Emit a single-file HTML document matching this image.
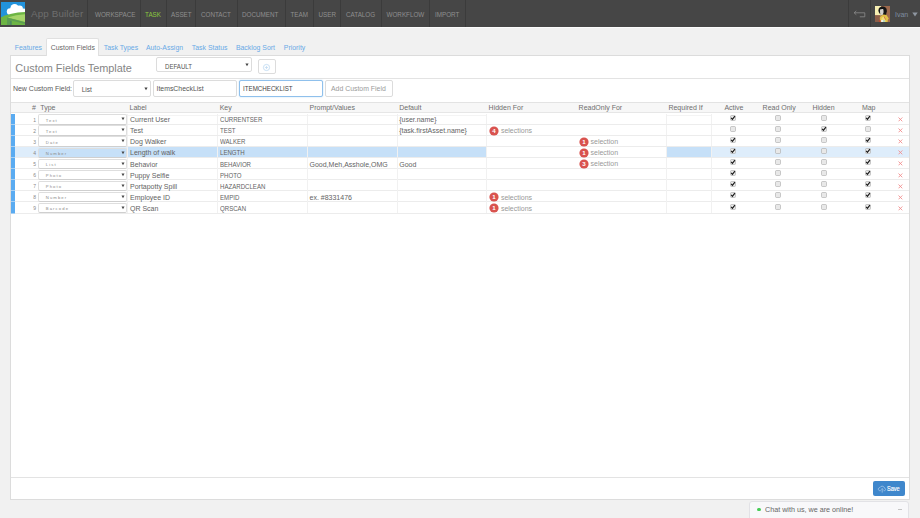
<!DOCTYPE html>
<html><head><meta charset="utf-8">
<style>
*{box-sizing:border-box;margin:0;padding:0}
html,body{width:920px;height:518px;overflow:hidden}
body{background:#f1f1f1;font-family:"Liberation Sans",sans-serif;position:relative;color:#555}
.a{position:absolute;white-space:nowrap}
#hdr{position:absolute;left:0;top:0;width:920px;height:27px;background:#464646}
.dv{position:absolute;top:0;width:1px;height:27px;background:#3b3b3b}
.nav{position:absolute;top:11px;font-size:6.3px;line-height:7px;color:#8f8f8f;white-space:nowrap}
.tab{position:absolute;top:42.5px;font-size:6.9px;line-height:9px;color:#68a9e6;white-space:nowrap}
#panel{position:absolute;left:10px;top:55px;width:900px;height:445px;background:#fff;border:1px solid #dcdcdc}
.hl{position:absolute;height:1px;background:#e3e3e3}
.box{position:absolute;border:1px solid #dcdcdc;border-radius:2px;background:#fff}
.t7{font-size:7px;line-height:9px}
.up{font-size:7px !important;transform:scaleX(.87);transform-origin:0 0}
.th{position:absolute;top:104px;font-size:7px;line-height:8px;color:#6e6e6e;white-space:nowrap}
</style></head><body>

<div id="hdr">
  <svg class="a" style="left:1px;top:2px" width="24" height="23" viewBox="0 0 24 23">
    <rect width="24" height="23" fill="#2293dc"/>
    <circle cx="9.2" cy="9.6" r="3.4" fill="#fff"/>
    <circle cx="13.6" cy="6.2" r="4.3" fill="#fff"/>
    <circle cx="18.6" cy="6.8" r="3.3" fill="#fff"/>
    <circle cx="22.5" cy="9.2" r="2.8" fill="#fff"/>
    <rect x="9" y="7" width="15" height="5" fill="#fff"/>
    <path d="M0 15.2 Q9 10.8 24 10 L24 23 L0 23 Z" fill="#6db544"/>
    <path d="M6.5 15.6 Q15 12.4 24 12.2 L24 20 Z" fill="#a6d46a"/>
    <path d="M6 15.6 L24 20.2 L24 22 L10.5 18.6 L10.5 23 L6 23 Z" fill="#5c9d52"/>
    <rect x="9" y="19" width="1.6" height="4" fill="#4f8c60"/>
  </svg>
  <div class="a" style="left:31px;top:7.5px;font-size:9.8px;line-height:11px;letter-spacing:.15px;color:#6e6e6e">App Builder</div>
  <div class="dv" style="left:87px"></div>
  <div class="dv" style="left:140px"></div>
  <div class="dv" style="left:166px"></div>
  <div class="dv" style="left:195px"></div>
  <div class="dv" style="left:237px"></div>
  <div class="dv" style="left:285px"></div>
  <div class="dv" style="left:313px"></div>
  <div class="dv" style="left:340px"></div>
  <div class="dv" style="left:381px"></div>
  <div class="dv" style="left:429px"></div>
  <div class="dv" style="left:465px"></div>
  <div class="dv" style="left:848px"></div>
  <div class="dv" style="left:870px"></div>
  <div class="nav" style="left:95px">WORKSPACE</div>
  <div class="nav" style="left:145px;color:#8cc63f">TASK</div>
  <div class="nav" style="left:171px">ASSET</div>
  <div class="nav" style="left:201px">CONTACT</div>
  <div class="nav" style="left:242px">DOCUMENT</div>
  <div class="nav" style="left:290.5px">TEAM</div>
  <div class="nav" style="left:318.5px">USER</div>
  <div class="nav" style="left:346px">CATALOG</div>
  <div class="nav" style="left:386.5px">WORKFLOW</div>
  <div class="nav" style="left:435px">IMPORT</div>
  <svg class="a" style="left:853px;top:10px" width="14" height="9" viewBox="0 0 14 9">
    <path d="M1.2 2.8 H11.8 V6.8 H6.8" fill="none" stroke="#8c8c8c" stroke-width="0.8"/>
    <path d="M3.3 0.9 L1.1 2.8 L3.3 4.7" fill="none" stroke="#8c8c8c" stroke-width="0.8"/>
  </svg>
  <svg class="a" style="left:875px;top:6px" width="15" height="16" viewBox="0 0 15 16">
    <rect width="15" height="16" fill="#9e6a4e"/>
    <rect width="6" height="9.3" fill="#f6eeb2"/>
    <rect y="9.3" width="5" height="6.7" fill="#8c5e48"/>
    <ellipse cx="7.6" cy="4.5" rx="4.2" ry="4.1" fill="#161616"/>
    <path d="M9 5 L11.6 5 L11.2 8.6 L9.6 9.6 L8.6 9.6 Z" fill="#161616"/>
    <path d="M5 3.6 C6 3.2 7.5 2.6 8.4 3.4 L8.6 6.2 L7.8 8.8 L6.4 9.2 L5.1 7.6 Z" fill="#d4d2cc"/>
    <path d="M5 16 L4.8 11.2 L6.6 9.6 L8.8 8.6 L11.4 9 L13.8 12.6 L12.8 14 L12.6 16 Z" fill="#e2c244"/>
    <path d="M6 16 L6.6 12 L8.6 10.6 L10.5 11.5 L10.5 16 Z" fill="#efdc7c"/>
    <rect x="4.2" y="14.2" width="1.5" height="1.8" fill="#c8402c"/>
    <rect x="6.2" y="14" width="2" height="2" fill="#eeeeea"/>
    <rect x="8.2" y="14.2" width="1.6" height="1.8" fill="#a8d8c8"/>
    <path d="M9.2 10.6 L10.6 13.6" stroke="#c8402c" stroke-width="0.7"/>
  </svg>
  <div class="nav" style="left:895px;top:11px;font-size:7px;color:#7f8ea0">Ivan</div>
  <svg class="a" style="left:912px;top:12px" width="6" height="5" viewBox="0 0 6 5"><path d="M0.3 0.5 H5.7 L3 4.5 Z" fill="#8e96a0"/></svg>
</div>
<div class="a" style="left:0;top:27px;width:920px;height:1px;background:#fbfbfb"></div>

<!-- tabs -->
<div class="a" style="left:46px;top:38px;width:53px;height:18px;background:#fff;border:1px solid #e0e0e0;border-bottom:none;border-radius:2px 2px 0 0;z-index:2"></div>
<div class="tab" style="left:14.8px">Features</div>
<div class="tab" style="left:50.8px;color:#666;z-index:3">Custom Fields</div>
<div class="tab" style="left:103.8px">Task Types</div>
<div class="tab" style="left:145.9px">Auto-Assign</div>
<div class="tab" style="left:191.8px">Task Status</div>
<div class="tab" style="left:235.9px">Backlog Sort</div>
<div class="tab" style="left:283.8px">Priority</div>

<div id="panel"></div>

<!-- title row -->
<div class="a" style="left:15.3px;top:62.3px;font-size:10.9px;line-height:13px;color:#858585">Custom Fields Template</div>
<div class="box" style="left:156px;top:57px;width:95.5px;height:14.6px"></div>
<div class="a up" style="left:164.7px;top:61.8px;line-height:9px;color:#555">DEFAULT</div>
<svg class="a" style="left:245px;top:62.5px" width="4" height="4" viewBox="0 0 4 4"><path d="M0.4 0.6 H3.6 L2 3.3 Z" fill="#444"/></svg>
<div class="box" style="left:257.5px;top:59.3px;width:18.5px;height:14.5px"></div>
<svg class="a" style="left:262px;top:62.6px" width="9" height="9" viewBox="0 0 9 9"><circle cx="4.5" cy="4.5" r="3.1" fill="none" stroke="#c3dcf3" stroke-width="0.9"/><path d="M4.5 2.9 V6.1 M2.9 4.5 H6.1" stroke="#c3dcf3" stroke-width="0.8"/></svg>
<div class="hl" style="left:11px;top:78px;width:898px"></div>

<!-- new custom field row -->
<div class="a t7" style="left:12.9px;top:84px;color:#5a5a5a">New Custom Field:</div>
<div class="box" style="left:73px;top:80px;width:77.5px;height:16.8px"></div>
<div class="a" style="left:81.7px;top:85px;font-size:6.6px;line-height:9px;color:#555">List</div>
<svg class="a" style="left:144.2px;top:86.8px" width="4" height="4" viewBox="0 0 4 4"><path d="M0.4 0.6 H3.6 L2 3.3 Z" fill="#444"/></svg>
<div class="box" style="left:152.5px;top:80px;width:84px;height:16.8px"></div>
<div class="a" style="left:156.5px;top:84.2px;font-size:6.9px;line-height:9px;color:#555">ItemsCheckList</div>
<div class="box" style="left:238.6px;top:80px;width:84.5px;height:16.5px;border-color:#8fc0ec;box-shadow:0 0 1.5px rgba(102,175,233,.5)"></div>
<div class="a up" style="left:242.6px;top:84px;line-height:9px;color:#444;transform:scaleX(.885)">ITEMCHECKLIST</div>
<div class="box" style="left:325px;top:80px;width:67.5px;height:16.5px"></div>
<div class="a" style="left:331px;top:84.3px;font-size:6.9px;line-height:9px;color:#9a9a9a">Add Custom Field</div>
<div class="hl" style="left:11px;top:101.5px;width:898px"></div>

<!-- table header -->
<div class="a" style="left:11px;top:102.5px;width:898px;height:10px;background:#f7f7f7"></div>
<div class="hl" style="left:11px;top:112px;width:898px;background:#e6e6e6"></div>
<div class="th" style="left:32px">#</div>
<div class="th" style="left:40.3px">Type</div>
<div class="th" style="left:129.5px">Label</div>
<div class="th" style="left:219.7px">Key</div>
<div class="th" style="left:309.5px">Prompt/Values</div>
<div class="th" style="left:399.2px">Default</div>
<div class="th" style="left:488.6px">Hidden For</div>
<div class="th" style="left:578.6px">ReadOnly For</div>
<div class="th" style="left:668.4px">Required If</div>
<div class="th" style="left:724.4px">Active</div>
<div class="th" style="left:762.6px">Read Only</div>
<div class="th" style="left:812.4px">Hidden</div>
<div class="th" style="left:861.9px">Map</div>


<!-- footer -->
<div class="hl" style="left:11px;top:477px;width:898px;background:#e3e3e3"></div>
<div class="a" style="left:873px;top:481.3px;width:32px;height:14.5px;background:#3f87cc;border-radius:2px"></div>
<svg class="a" style="left:875px;top:482px" width="14" height="14" viewBox="0 0 14 14"><path d="M5.8 8.7 H4.9 C3.9 8.7 3.3 8 3.3 7.1 C3.3 6.2 4 5.6 4.9 5.6 C5.2 4.8 6.1 4.2 7.1 4.2 C8.4 4.2 9.3 5 9.4 6.1 C10.1 6.2 10.6 6.7 10.6 7.4 C10.6 8.1 10.1 8.7 9.4 8.7 H8.6" fill="none" stroke="#aecbea" stroke-width="0.75"/><path d="M7.2 10.6 V6.6 M6.2 7.6 L7.2 6.6 L8.2 7.6" fill="none" stroke="#aecbea" stroke-width="0.75"/></svg>
<div class="a" style="left:887.3px;top:485px;font-size:6.8px;line-height:8px;color:#fff;transform:scaleX(.82);transform-origin:0 0;-webkit-text-stroke:0.15px #fff">Save</div>

<!-- chat -->
<div class="a" style="left:749px;top:501px;width:160px;height:20px;background:#f8f8fa;border:1px solid #e2e2e6;border-radius:3px 3px 0 0"></div>
<div class="a" style="left:757.2px;top:507.7px;width:3.8px;height:3.8px;border-radius:50%;background:#45cc55"></div>
<div class="a" style="left:765px;top:505.3px;font-size:7.2px;line-height:9px;color:#666">Chat with us, we are online!</div>
<div class="a" style="left:897.5px;top:509px;width:4.5px;height:0.8px;background:#c4c4c4"></div>

<!-- ROWS -->
<div class="a" style="left:11px;top:113.50px;width:4px;height:99.63px;background:#5aabf1"></div>
<div class="a" style="left:15px;top:123.97px;width:894px;height:1px;background:#ececec"></div>
<div class="a" style="left:11px;top:123.97px;width:4px;height:1px;background:#a6d0f5"></div>
<div class="a" style="left:26px;top:116.70px;width:10px;text-align:right;font-size:5px;line-height:6px;color:#888">1</div>
<div class="a" style="left:38px;top:114.30px;width:89.2px;height:10.3px;border:1px solid #dedede;border-bottom-color:#cfcfcf;border-radius:2px;background:#fff"></div>
<div class="a" style="left:45.8px;top:118.80px;font-size:4.2px;line-height:4px;color:#8a8a8a;letter-spacing:1.1px">Text</div>
<svg class="a" style="left:121.2px;top:117.30px" width="4" height="4" viewBox="0 0 4 4"><path d="M0.5 0.6 H3.5 L2 3.2 Z" fill="#444"/></svg>
<div class="a" style="left:127px;top:114.50px;width:359px;height:1px;background:#f4f4f4"></div>
<div class="a" style="left:666px;top:114.50px;width:45px;height:1px;background:#f4f4f4"></div>
<div class="a" style="left:127px;top:113.80px;width:1px;height:10.47px;background:#f1f1f1"></div>
<div class="a" style="left:217px;top:113.80px;width:1px;height:10.47px;background:#f1f1f1"></div>
<div class="a" style="left:307px;top:113.80px;width:1px;height:10.47px;background:#f1f1f1"></div>
<div class="a" style="left:397px;top:113.80px;width:1px;height:10.47px;background:#f1f1f1"></div>
<div class="a" style="left:486px;top:113.80px;width:1px;height:10.47px;background:#f1f1f1"></div>
<div class="a" style="left:666px;top:113.80px;width:1px;height:10.47px;background:#f1f1f1"></div>
<div class="a" style="left:711px;top:113.80px;width:1px;height:10.47px;background:#f1f1f1"></div>
<div class="a" style="left:130px;top:115.25px;font-size:7px;line-height:9px;color:#636363">Current User</div>
<div class="a up" style="left:219.7px;top:115.25px;line-height:9px;color:#636363">CURRENTSER</div>
<div class="a" style="left:399.2px;top:115.25px;font-size:7px;line-height:9px;color:#636363">{user.name}</div>
<svg class="a" style="left:730.30px;top:115.00px" width="6" height="6" viewBox="0 0 6 6"><rect x="0.5" y="0.5" width="5" height="5" rx="1" fill="#e8e8e8" stroke="#aaa" stroke-width="0.6"/><path d="M1.2 2.9 L2.4 4.3 L4.9 1.1" fill="none" stroke="#1a1a1a" stroke-width="1.2"/></svg>
<svg class="a" style="left:775.30px;top:115.00px" width="6" height="6" viewBox="0 0 6 6"><rect x="0.5" y="0.5" width="5" height="5" rx="1" fill="#e8e8e8" stroke="#aaa" stroke-width="0.6"/></svg>
<svg class="a" style="left:820.50px;top:115.00px" width="6" height="6" viewBox="0 0 6 6"><rect x="0.5" y="0.5" width="5" height="5" rx="1" fill="#e8e8e8" stroke="#aaa" stroke-width="0.6"/></svg>
<svg class="a" style="left:865.00px;top:115.00px" width="6" height="6" viewBox="0 0 6 6"><rect x="0.5" y="0.5" width="5" height="5" rx="1" fill="#e8e8e8" stroke="#aaa" stroke-width="0.6"/><path d="M1.2 2.9 L2.4 4.3 L4.9 1.1" fill="none" stroke="#1a1a1a" stroke-width="1.2"/></svg>
<svg class="a" style="left:897.6px;top:117.20px" width="5" height="5" viewBox="0 0 5 5"><path d="M0.5 0.5 L4.3 4.3 M4.3 0.5 L0.5 4.3" stroke="#f28e8e" stroke-width="0.9"/></svg>
<div class="a" style="left:15px;top:135.04px;width:894px;height:1px;background:#ececec"></div>
<div class="a" style="left:11px;top:135.04px;width:4px;height:1px;background:#a6d0f5"></div>
<div class="a" style="left:26px;top:127.77px;width:10px;text-align:right;font-size:5px;line-height:6px;color:#888">2</div>
<div class="a" style="left:38px;top:125.37px;width:89.2px;height:10.3px;border:1px solid #dedede;border-bottom-color:#cfcfcf;border-radius:2px;background:#fff"></div>
<div class="a" style="left:45.8px;top:129.87px;font-size:4.2px;line-height:4px;color:#8a8a8a;letter-spacing:1.1px">Text</div>
<svg class="a" style="left:121.2px;top:128.37px" width="4" height="4" viewBox="0 0 4 4"><path d="M0.5 0.6 H3.5 L2 3.2 Z" fill="#444"/></svg>
<div class="a" style="left:127px;top:124.87px;width:1px;height:10.47px;background:#f1f1f1"></div>
<div class="a" style="left:217px;top:124.87px;width:1px;height:10.47px;background:#f1f1f1"></div>
<div class="a" style="left:307px;top:124.87px;width:1px;height:10.47px;background:#f1f1f1"></div>
<div class="a" style="left:397px;top:124.87px;width:1px;height:10.47px;background:#f1f1f1"></div>
<div class="a" style="left:486px;top:124.87px;width:1px;height:10.47px;background:#f1f1f1"></div>
<div class="a" style="left:666px;top:124.87px;width:1px;height:10.47px;background:#f1f1f1"></div>
<div class="a" style="left:711px;top:124.87px;width:1px;height:10.47px;background:#f1f1f1"></div>
<div class="a" style="left:130px;top:126.32px;font-size:7px;line-height:9px;color:#636363">Test</div>
<div class="a up" style="left:219.7px;top:126.32px;line-height:9px;color:#636363">TEST</div>
<div class="a" style="left:399.2px;top:126.32px;font-size:7px;line-height:9px;color:#636363">{task.firstAsset.name}</div>
<svg class="a" style="left:489.00px;top:125.67px" width="10" height="10" viewBox="0 0 10 10"><circle cx="5" cy="5" r="4.6" fill="#d9534f"/><text x="5" y="7.2" font-family="Liberation Sans" font-size="6.2" font-weight="bold" fill="#fff" text-anchor="middle">4</text></svg>
<div class="a" style="left:500.90px;top:126.17px;font-size:7px;line-height:9px;color:#999">selections</div>
<svg class="a" style="left:730.30px;top:126.07px" width="6" height="6" viewBox="0 0 6 6"><rect x="0.5" y="0.5" width="5" height="5" rx="1" fill="#e8e8e8" stroke="#aaa" stroke-width="0.6"/></svg>
<svg class="a" style="left:775.30px;top:126.07px" width="6" height="6" viewBox="0 0 6 6"><rect x="0.5" y="0.5" width="5" height="5" rx="1" fill="#e8e8e8" stroke="#aaa" stroke-width="0.6"/></svg>
<svg class="a" style="left:820.50px;top:126.07px" width="6" height="6" viewBox="0 0 6 6"><rect x="0.5" y="0.5" width="5" height="5" rx="1" fill="#e8e8e8" stroke="#aaa" stroke-width="0.6"/><path d="M1.2 2.9 L2.4 4.3 L4.9 1.1" fill="none" stroke="#1a1a1a" stroke-width="1.2"/></svg>
<svg class="a" style="left:865.00px;top:126.07px" width="6" height="6" viewBox="0 0 6 6"><rect x="0.5" y="0.5" width="5" height="5" rx="1" fill="#e8e8e8" stroke="#aaa" stroke-width="0.6"/></svg>
<svg class="a" style="left:897.6px;top:128.27px" width="5" height="5" viewBox="0 0 5 5"><path d="M0.5 0.5 L4.3 4.3 M4.3 0.5 L0.5 4.3" stroke="#f28e8e" stroke-width="0.9"/></svg>
<div class="a" style="left:15px;top:146.11px;width:894px;height:1px;background:#ececec"></div>
<div class="a" style="left:11px;top:146.11px;width:4px;height:1px;background:#a6d0f5"></div>
<div class="a" style="left:26px;top:138.84px;width:10px;text-align:right;font-size:5px;line-height:6px;color:#888">3</div>
<div class="a" style="left:38px;top:136.44px;width:89.2px;height:10.3px;border:1px solid #dedede;border-bottom-color:#cfcfcf;border-radius:2px;background:#fff"></div>
<div class="a" style="left:45.8px;top:140.94px;font-size:4.2px;line-height:4px;color:#8a8a8a;letter-spacing:1.1px">Date</div>
<svg class="a" style="left:121.2px;top:139.44px" width="4" height="4" viewBox="0 0 4 4"><path d="M0.5 0.6 H3.5 L2 3.2 Z" fill="#444"/></svg>
<div class="a" style="left:127px;top:135.94px;width:1px;height:10.47px;background:#f1f1f1"></div>
<div class="a" style="left:217px;top:135.94px;width:1px;height:10.47px;background:#f1f1f1"></div>
<div class="a" style="left:307px;top:135.94px;width:1px;height:10.47px;background:#f1f1f1"></div>
<div class="a" style="left:397px;top:135.94px;width:1px;height:10.47px;background:#f1f1f1"></div>
<div class="a" style="left:486px;top:135.94px;width:1px;height:10.47px;background:#f1f1f1"></div>
<div class="a" style="left:666px;top:135.94px;width:1px;height:10.47px;background:#f1f1f1"></div>
<div class="a" style="left:711px;top:135.94px;width:1px;height:10.47px;background:#f1f1f1"></div>
<div class="a" style="left:130px;top:137.39px;font-size:7px;line-height:9px;color:#636363">Dog Walker</div>
<div class="a up" style="left:219.7px;top:137.39px;line-height:9px;color:#636363">WALKER</div>
<svg class="a" style="left:578.60px;top:136.74px" width="10" height="10" viewBox="0 0 10 10"><circle cx="5" cy="5" r="4.6" fill="#d9534f"/><text x="5" y="7.2" font-family="Liberation Sans" font-size="6.2" font-weight="bold" fill="#fff" text-anchor="middle">1</text></svg>
<div class="a" style="left:590.50px;top:137.24px;font-size:7px;line-height:9px;color:#999">selection</div>
<svg class="a" style="left:730.30px;top:137.14px" width="6" height="6" viewBox="0 0 6 6"><rect x="0.5" y="0.5" width="5" height="5" rx="1" fill="#e8e8e8" stroke="#aaa" stroke-width="0.6"/><path d="M1.2 2.9 L2.4 4.3 L4.9 1.1" fill="none" stroke="#1a1a1a" stroke-width="1.2"/></svg>
<svg class="a" style="left:775.30px;top:137.14px" width="6" height="6" viewBox="0 0 6 6"><rect x="0.5" y="0.5" width="5" height="5" rx="1" fill="#e8e8e8" stroke="#aaa" stroke-width="0.6"/></svg>
<svg class="a" style="left:820.50px;top:137.14px" width="6" height="6" viewBox="0 0 6 6"><rect x="0.5" y="0.5" width="5" height="5" rx="1" fill="#e8e8e8" stroke="#aaa" stroke-width="0.6"/></svg>
<svg class="a" style="left:865.00px;top:137.14px" width="6" height="6" viewBox="0 0 6 6"><rect x="0.5" y="0.5" width="5" height="5" rx="1" fill="#e8e8e8" stroke="#aaa" stroke-width="0.6"/><path d="M1.2 2.9 L2.4 4.3 L4.9 1.1" fill="none" stroke="#1a1a1a" stroke-width="1.2"/></svg>
<svg class="a" style="left:897.6px;top:139.34px" width="5" height="5" viewBox="0 0 5 5"><path d="M0.5 0.5 L4.3 4.3 M4.3 0.5 L0.5 4.3" stroke="#f28e8e" stroke-width="0.9"/></svg>
<div class="a" style="left:15px;top:146.71px;width:894px;height:11.07px;background:#deedfb"></div>
<div class="a" style="left:127px;top:146.71px;width:359px;height:11.07px;background:#c6e0f8"></div>
<div class="a" style="left:666px;top:146.71px;width:45px;height:11.07px;background:#c6e0f8"></div>
<div class="a" style="left:487px;top:146.71px;width:179px;height:11.07px;background:#fff"></div>
<div class="a" style="left:15px;top:157.18px;width:894px;height:1px;background:#ececec"></div>
<div class="a" style="left:11px;top:157.18px;width:4px;height:1px;background:#a6d0f5"></div>
<div class="a" style="left:26px;top:149.91px;width:10px;text-align:right;font-size:5px;line-height:6px;color:#888">4</div>
<div class="a" style="left:38px;top:147.51px;width:89.2px;height:10.3px;border:1px solid #dedede;border-bottom-color:#cfcfcf;border-radius:2px;background:#c6e0f8"></div>
<div class="a" style="left:45.8px;top:152.01px;font-size:4.2px;line-height:4px;color:#8a8a8a;letter-spacing:1.1px">Number</div>
<svg class="a" style="left:121.2px;top:150.51px" width="4" height="4" viewBox="0 0 4 4"><path d="M0.5 0.6 H3.5 L2 3.2 Z" fill="#444"/></svg>
<div class="a" style="left:127px;top:147.01px;width:1px;height:10.47px;background:#f1f1f1"></div>
<div class="a" style="left:217px;top:147.01px;width:1px;height:10.47px;background:#f1f1f1"></div>
<div class="a" style="left:307px;top:147.01px;width:1px;height:10.47px;background:#f1f1f1"></div>
<div class="a" style="left:397px;top:147.01px;width:1px;height:10.47px;background:#f1f1f1"></div>
<div class="a" style="left:486px;top:147.01px;width:1px;height:10.47px;background:#f1f1f1"></div>
<div class="a" style="left:666px;top:147.01px;width:1px;height:10.47px;background:#f1f1f1"></div>
<div class="a" style="left:711px;top:147.01px;width:1px;height:10.47px;background:#f1f1f1"></div>
<div class="a" style="left:130px;top:148.46px;font-size:7px;line-height:9px;color:#636363">Length of walk</div>
<div class="a up" style="left:219.7px;top:148.46px;line-height:9px;color:#636363">LENGTH</div>
<svg class="a" style="left:578.60px;top:147.81px" width="10" height="10" viewBox="0 0 10 10"><circle cx="5" cy="5" r="4.6" fill="#d9534f"/><text x="5" y="7.2" font-family="Liberation Sans" font-size="6.2" font-weight="bold" fill="#fff" text-anchor="middle">1</text></svg>
<div class="a" style="left:590.50px;top:148.31px;font-size:7px;line-height:9px;color:#999">selection</div>
<svg class="a" style="left:730.30px;top:148.21px" width="6" height="6" viewBox="0 0 6 6"><rect x="0.5" y="0.5" width="5" height="5" rx="1" fill="#e8e8e8" stroke="#aaa" stroke-width="0.6"/><path d="M1.2 2.9 L2.4 4.3 L4.9 1.1" fill="none" stroke="#1a1a1a" stroke-width="1.2"/></svg>
<svg class="a" style="left:775.30px;top:148.21px" width="6" height="6" viewBox="0 0 6 6"><rect x="0.5" y="0.5" width="5" height="5" rx="1" fill="#e8e8e8" stroke="#aaa" stroke-width="0.6"/></svg>
<svg class="a" style="left:820.50px;top:148.21px" width="6" height="6" viewBox="0 0 6 6"><rect x="0.5" y="0.5" width="5" height="5" rx="1" fill="#e8e8e8" stroke="#aaa" stroke-width="0.6"/></svg>
<svg class="a" style="left:865.00px;top:148.21px" width="6" height="6" viewBox="0 0 6 6"><rect x="0.5" y="0.5" width="5" height="5" rx="1" fill="#e8e8e8" stroke="#aaa" stroke-width="0.6"/><path d="M1.2 2.9 L2.4 4.3 L4.9 1.1" fill="none" stroke="#1a1a1a" stroke-width="1.2"/></svg>
<svg class="a" style="left:897.6px;top:150.41px" width="5" height="5" viewBox="0 0 5 5"><path d="M0.5 0.5 L4.3 4.3 M4.3 0.5 L0.5 4.3" stroke="#f28e8e" stroke-width="0.9"/></svg>
<div class="a" style="left:15px;top:168.25px;width:894px;height:1px;background:#ececec"></div>
<div class="a" style="left:11px;top:168.25px;width:4px;height:1px;background:#a6d0f5"></div>
<div class="a" style="left:26px;top:160.98px;width:10px;text-align:right;font-size:5px;line-height:6px;color:#888">5</div>
<div class="a" style="left:38px;top:158.58px;width:89.2px;height:10.3px;border:1px solid #dedede;border-bottom-color:#cfcfcf;border-radius:2px;background:#fff"></div>
<div class="a" style="left:45.8px;top:163.08px;font-size:4.2px;line-height:4px;color:#8a8a8a;letter-spacing:1.1px">List</div>
<svg class="a" style="left:121.2px;top:161.58px" width="4" height="4" viewBox="0 0 4 4"><path d="M0.5 0.6 H3.5 L2 3.2 Z" fill="#444"/></svg>
<div class="a" style="left:127px;top:158.08px;width:1px;height:10.47px;background:#f1f1f1"></div>
<div class="a" style="left:217px;top:158.08px;width:1px;height:10.47px;background:#f1f1f1"></div>
<div class="a" style="left:307px;top:158.08px;width:1px;height:10.47px;background:#f1f1f1"></div>
<div class="a" style="left:397px;top:158.08px;width:1px;height:10.47px;background:#f1f1f1"></div>
<div class="a" style="left:486px;top:158.08px;width:1px;height:10.47px;background:#f1f1f1"></div>
<div class="a" style="left:666px;top:158.08px;width:1px;height:10.47px;background:#f1f1f1"></div>
<div class="a" style="left:711px;top:158.08px;width:1px;height:10.47px;background:#f1f1f1"></div>
<div class="a" style="left:130px;top:159.53px;font-size:7px;line-height:9px;color:#636363">Behavior</div>
<div class="a up" style="left:219.7px;top:159.53px;line-height:9px;color:#636363">BEHAVIOR</div>
<div class="a" style="left:309.5px;top:159.53px;font-size:7px;line-height:9px;color:#636363">Good,Meh,Asshole,OMG</div>
<div class="a" style="left:399.2px;top:159.53px;font-size:7px;line-height:9px;color:#636363">Good</div>
<svg class="a" style="left:578.60px;top:158.88px" width="10" height="10" viewBox="0 0 10 10"><circle cx="5" cy="5" r="4.6" fill="#d9534f"/><text x="5" y="7.2" font-family="Liberation Sans" font-size="6.2" font-weight="bold" fill="#fff" text-anchor="middle">3</text></svg>
<div class="a" style="left:590.50px;top:159.38px;font-size:7px;line-height:9px;color:#999">selection</div>
<svg class="a" style="left:730.30px;top:159.28px" width="6" height="6" viewBox="0 0 6 6"><rect x="0.5" y="0.5" width="5" height="5" rx="1" fill="#e8e8e8" stroke="#aaa" stroke-width="0.6"/><path d="M1.2 2.9 L2.4 4.3 L4.9 1.1" fill="none" stroke="#1a1a1a" stroke-width="1.2"/></svg>
<svg class="a" style="left:775.30px;top:159.28px" width="6" height="6" viewBox="0 0 6 6"><rect x="0.5" y="0.5" width="5" height="5" rx="1" fill="#e8e8e8" stroke="#aaa" stroke-width="0.6"/></svg>
<svg class="a" style="left:820.50px;top:159.28px" width="6" height="6" viewBox="0 0 6 6"><rect x="0.5" y="0.5" width="5" height="5" rx="1" fill="#e8e8e8" stroke="#aaa" stroke-width="0.6"/></svg>
<svg class="a" style="left:865.00px;top:159.28px" width="6" height="6" viewBox="0 0 6 6"><rect x="0.5" y="0.5" width="5" height="5" rx="1" fill="#e8e8e8" stroke="#aaa" stroke-width="0.6"/><path d="M1.2 2.9 L2.4 4.3 L4.9 1.1" fill="none" stroke="#1a1a1a" stroke-width="1.2"/></svg>
<svg class="a" style="left:897.6px;top:161.48px" width="5" height="5" viewBox="0 0 5 5"><path d="M0.5 0.5 L4.3 4.3 M4.3 0.5 L0.5 4.3" stroke="#f28e8e" stroke-width="0.9"/></svg>
<div class="a" style="left:15px;top:179.32px;width:894px;height:1px;background:#ececec"></div>
<div class="a" style="left:11px;top:179.32px;width:4px;height:1px;background:#a6d0f5"></div>
<div class="a" style="left:26px;top:172.05px;width:10px;text-align:right;font-size:5px;line-height:6px;color:#888">6</div>
<div class="a" style="left:38px;top:169.65px;width:89.2px;height:10.3px;border:1px solid #dedede;border-bottom-color:#cfcfcf;border-radius:2px;background:#fff"></div>
<div class="a" style="left:45.8px;top:174.15px;font-size:4.2px;line-height:4px;color:#8a8a8a;letter-spacing:1.1px">Photo</div>
<svg class="a" style="left:121.2px;top:172.65px" width="4" height="4" viewBox="0 0 4 4"><path d="M0.5 0.6 H3.5 L2 3.2 Z" fill="#444"/></svg>
<div class="a" style="left:127px;top:169.15px;width:1px;height:10.47px;background:#f1f1f1"></div>
<div class="a" style="left:217px;top:169.15px;width:1px;height:10.47px;background:#f1f1f1"></div>
<div class="a" style="left:307px;top:169.15px;width:1px;height:10.47px;background:#f1f1f1"></div>
<div class="a" style="left:397px;top:169.15px;width:1px;height:10.47px;background:#f1f1f1"></div>
<div class="a" style="left:486px;top:169.15px;width:1px;height:10.47px;background:#f1f1f1"></div>
<div class="a" style="left:666px;top:169.15px;width:1px;height:10.47px;background:#f1f1f1"></div>
<div class="a" style="left:711px;top:169.15px;width:1px;height:10.47px;background:#f1f1f1"></div>
<div class="a" style="left:130px;top:170.60px;font-size:7px;line-height:9px;color:#636363">Puppy Selfie</div>
<div class="a up" style="left:219.7px;top:170.60px;line-height:9px;color:#636363">PHOTO</div>
<svg class="a" style="left:730.30px;top:170.35px" width="6" height="6" viewBox="0 0 6 6"><rect x="0.5" y="0.5" width="5" height="5" rx="1" fill="#e8e8e8" stroke="#aaa" stroke-width="0.6"/><path d="M1.2 2.9 L2.4 4.3 L4.9 1.1" fill="none" stroke="#1a1a1a" stroke-width="1.2"/></svg>
<svg class="a" style="left:775.30px;top:170.35px" width="6" height="6" viewBox="0 0 6 6"><rect x="0.5" y="0.5" width="5" height="5" rx="1" fill="#e8e8e8" stroke="#aaa" stroke-width="0.6"/></svg>
<svg class="a" style="left:820.50px;top:170.35px" width="6" height="6" viewBox="0 0 6 6"><rect x="0.5" y="0.5" width="5" height="5" rx="1" fill="#e8e8e8" stroke="#aaa" stroke-width="0.6"/></svg>
<svg class="a" style="left:865.00px;top:170.35px" width="6" height="6" viewBox="0 0 6 6"><rect x="0.5" y="0.5" width="5" height="5" rx="1" fill="#e8e8e8" stroke="#aaa" stroke-width="0.6"/><path d="M1.2 2.9 L2.4 4.3 L4.9 1.1" fill="none" stroke="#1a1a1a" stroke-width="1.2"/></svg>
<svg class="a" style="left:897.6px;top:172.55px" width="5" height="5" viewBox="0 0 5 5"><path d="M0.5 0.5 L4.3 4.3 M4.3 0.5 L0.5 4.3" stroke="#f28e8e" stroke-width="0.9"/></svg>
<div class="a" style="left:15px;top:190.39px;width:894px;height:1px;background:#ececec"></div>
<div class="a" style="left:11px;top:190.39px;width:4px;height:1px;background:#a6d0f5"></div>
<div class="a" style="left:26px;top:183.12px;width:10px;text-align:right;font-size:5px;line-height:6px;color:#888">7</div>
<div class="a" style="left:38px;top:180.72px;width:89.2px;height:10.3px;border:1px solid #dedede;border-bottom-color:#cfcfcf;border-radius:2px;background:#fff"></div>
<div class="a" style="left:45.8px;top:185.22px;font-size:4.2px;line-height:4px;color:#8a8a8a;letter-spacing:1.1px">Photo</div>
<svg class="a" style="left:121.2px;top:183.72px" width="4" height="4" viewBox="0 0 4 4"><path d="M0.5 0.6 H3.5 L2 3.2 Z" fill="#444"/></svg>
<div class="a" style="left:127px;top:180.22px;width:1px;height:10.47px;background:#f1f1f1"></div>
<div class="a" style="left:217px;top:180.22px;width:1px;height:10.47px;background:#f1f1f1"></div>
<div class="a" style="left:307px;top:180.22px;width:1px;height:10.47px;background:#f1f1f1"></div>
<div class="a" style="left:397px;top:180.22px;width:1px;height:10.47px;background:#f1f1f1"></div>
<div class="a" style="left:486px;top:180.22px;width:1px;height:10.47px;background:#f1f1f1"></div>
<div class="a" style="left:666px;top:180.22px;width:1px;height:10.47px;background:#f1f1f1"></div>
<div class="a" style="left:711px;top:180.22px;width:1px;height:10.47px;background:#f1f1f1"></div>
<div class="a" style="left:130px;top:181.67px;font-size:7px;line-height:9px;color:#636363">Portapotty Spill</div>
<div class="a up" style="left:219.7px;top:181.67px;line-height:9px;color:#636363">HAZARDCLEAN</div>
<svg class="a" style="left:730.30px;top:181.42px" width="6" height="6" viewBox="0 0 6 6"><rect x="0.5" y="0.5" width="5" height="5" rx="1" fill="#e8e8e8" stroke="#aaa" stroke-width="0.6"/><path d="M1.2 2.9 L2.4 4.3 L4.9 1.1" fill="none" stroke="#1a1a1a" stroke-width="1.2"/></svg>
<svg class="a" style="left:775.30px;top:181.42px" width="6" height="6" viewBox="0 0 6 6"><rect x="0.5" y="0.5" width="5" height="5" rx="1" fill="#e8e8e8" stroke="#aaa" stroke-width="0.6"/></svg>
<svg class="a" style="left:820.50px;top:181.42px" width="6" height="6" viewBox="0 0 6 6"><rect x="0.5" y="0.5" width="5" height="5" rx="1" fill="#e8e8e8" stroke="#aaa" stroke-width="0.6"/></svg>
<svg class="a" style="left:865.00px;top:181.42px" width="6" height="6" viewBox="0 0 6 6"><rect x="0.5" y="0.5" width="5" height="5" rx="1" fill="#e8e8e8" stroke="#aaa" stroke-width="0.6"/><path d="M1.2 2.9 L2.4 4.3 L4.9 1.1" fill="none" stroke="#1a1a1a" stroke-width="1.2"/></svg>
<svg class="a" style="left:897.6px;top:183.62px" width="5" height="5" viewBox="0 0 5 5"><path d="M0.5 0.5 L4.3 4.3 M4.3 0.5 L0.5 4.3" stroke="#f28e8e" stroke-width="0.9"/></svg>
<div class="a" style="left:15px;top:201.46px;width:894px;height:1px;background:#ececec"></div>
<div class="a" style="left:11px;top:201.46px;width:4px;height:1px;background:#a6d0f5"></div>
<div class="a" style="left:26px;top:194.19px;width:10px;text-align:right;font-size:5px;line-height:6px;color:#888">8</div>
<div class="a" style="left:38px;top:191.79px;width:89.2px;height:10.3px;border:1px solid #dedede;border-bottom-color:#cfcfcf;border-radius:2px;background:#fff"></div>
<div class="a" style="left:45.8px;top:196.29px;font-size:4.2px;line-height:4px;color:#8a8a8a;letter-spacing:1.1px">Number</div>
<svg class="a" style="left:121.2px;top:194.79px" width="4" height="4" viewBox="0 0 4 4"><path d="M0.5 0.6 H3.5 L2 3.2 Z" fill="#444"/></svg>
<div class="a" style="left:127px;top:191.29px;width:1px;height:10.47px;background:#f1f1f1"></div>
<div class="a" style="left:217px;top:191.29px;width:1px;height:10.47px;background:#f1f1f1"></div>
<div class="a" style="left:307px;top:191.29px;width:1px;height:10.47px;background:#f1f1f1"></div>
<div class="a" style="left:397px;top:191.29px;width:1px;height:10.47px;background:#f1f1f1"></div>
<div class="a" style="left:486px;top:191.29px;width:1px;height:10.47px;background:#f1f1f1"></div>
<div class="a" style="left:666px;top:191.29px;width:1px;height:10.47px;background:#f1f1f1"></div>
<div class="a" style="left:711px;top:191.29px;width:1px;height:10.47px;background:#f1f1f1"></div>
<div class="a" style="left:130px;top:192.74px;font-size:7px;line-height:9px;color:#636363">Employee ID</div>
<div class="a up" style="left:219.7px;top:192.74px;line-height:9px;color:#636363">EMPID</div>
<div class="a" style="left:309.5px;top:192.74px;font-size:7px;line-height:9px;color:#636363">ex. #8331476</div>
<svg class="a" style="left:489.00px;top:192.09px" width="10" height="10" viewBox="0 0 10 10"><circle cx="5" cy="5" r="4.6" fill="#d9534f"/><text x="5" y="7.2" font-family="Liberation Sans" font-size="6.2" font-weight="bold" fill="#fff" text-anchor="middle">1</text></svg>
<div class="a" style="left:500.90px;top:192.59px;font-size:7px;line-height:9px;color:#999">selections</div>
<svg class="a" style="left:730.30px;top:192.49px" width="6" height="6" viewBox="0 0 6 6"><rect x="0.5" y="0.5" width="5" height="5" rx="1" fill="#e8e8e8" stroke="#aaa" stroke-width="0.6"/><path d="M1.2 2.9 L2.4 4.3 L4.9 1.1" fill="none" stroke="#1a1a1a" stroke-width="1.2"/></svg>
<svg class="a" style="left:775.30px;top:192.49px" width="6" height="6" viewBox="0 0 6 6"><rect x="0.5" y="0.5" width="5" height="5" rx="1" fill="#e8e8e8" stroke="#aaa" stroke-width="0.6"/></svg>
<svg class="a" style="left:820.50px;top:192.49px" width="6" height="6" viewBox="0 0 6 6"><rect x="0.5" y="0.5" width="5" height="5" rx="1" fill="#e8e8e8" stroke="#aaa" stroke-width="0.6"/></svg>
<svg class="a" style="left:865.00px;top:192.49px" width="6" height="6" viewBox="0 0 6 6"><rect x="0.5" y="0.5" width="5" height="5" rx="1" fill="#e8e8e8" stroke="#aaa" stroke-width="0.6"/><path d="M1.2 2.9 L2.4 4.3 L4.9 1.1" fill="none" stroke="#1a1a1a" stroke-width="1.2"/></svg>
<svg class="a" style="left:897.6px;top:194.69px" width="5" height="5" viewBox="0 0 5 5"><path d="M0.5 0.5 L4.3 4.3 M4.3 0.5 L0.5 4.3" stroke="#f28e8e" stroke-width="0.9"/></svg>
<div class="a" style="left:15px;top:212.53px;width:894px;height:1px;background:#ececec"></div>
<div class="a" style="left:11px;top:212.53px;width:4px;height:1px;background:#a6d0f5"></div>
<div class="a" style="left:26px;top:205.26px;width:10px;text-align:right;font-size:5px;line-height:6px;color:#888">9</div>
<div class="a" style="left:38px;top:202.86px;width:89.2px;height:10.3px;border:1px solid #dedede;border-bottom-color:#cfcfcf;border-radius:2px;background:#fff"></div>
<div class="a" style="left:45.8px;top:207.36px;font-size:4.2px;line-height:4px;color:#8a8a8a;letter-spacing:1.1px">Barcode</div>
<svg class="a" style="left:121.2px;top:205.86px" width="4" height="4" viewBox="0 0 4 4"><path d="M0.5 0.6 H3.5 L2 3.2 Z" fill="#444"/></svg>
<div class="a" style="left:127px;top:202.36px;width:1px;height:10.47px;background:#f1f1f1"></div>
<div class="a" style="left:217px;top:202.36px;width:1px;height:10.47px;background:#f1f1f1"></div>
<div class="a" style="left:307px;top:202.36px;width:1px;height:10.47px;background:#f1f1f1"></div>
<div class="a" style="left:397px;top:202.36px;width:1px;height:10.47px;background:#f1f1f1"></div>
<div class="a" style="left:486px;top:202.36px;width:1px;height:10.47px;background:#f1f1f1"></div>
<div class="a" style="left:666px;top:202.36px;width:1px;height:10.47px;background:#f1f1f1"></div>
<div class="a" style="left:711px;top:202.36px;width:1px;height:10.47px;background:#f1f1f1"></div>
<div class="a" style="left:130px;top:203.81px;font-size:7px;line-height:9px;color:#636363">QR Scan</div>
<div class="a up" style="left:219.7px;top:203.81px;line-height:9px;color:#636363">QRSCAN</div>
<svg class="a" style="left:489.00px;top:203.16px" width="10" height="10" viewBox="0 0 10 10"><circle cx="5" cy="5" r="4.6" fill="#d9534f"/><text x="5" y="7.2" font-family="Liberation Sans" font-size="6.2" font-weight="bold" fill="#fff" text-anchor="middle">1</text></svg>
<div class="a" style="left:500.90px;top:203.66px;font-size:7px;line-height:9px;color:#999">selections</div>
<svg class="a" style="left:730.30px;top:203.56px" width="6" height="6" viewBox="0 0 6 6"><rect x="0.5" y="0.5" width="5" height="5" rx="1" fill="#e8e8e8" stroke="#aaa" stroke-width="0.6"/><path d="M1.2 2.9 L2.4 4.3 L4.9 1.1" fill="none" stroke="#1a1a1a" stroke-width="1.2"/></svg>
<svg class="a" style="left:775.30px;top:203.56px" width="6" height="6" viewBox="0 0 6 6"><rect x="0.5" y="0.5" width="5" height="5" rx="1" fill="#e8e8e8" stroke="#aaa" stroke-width="0.6"/></svg>
<svg class="a" style="left:820.50px;top:203.56px" width="6" height="6" viewBox="0 0 6 6"><rect x="0.5" y="0.5" width="5" height="5" rx="1" fill="#e8e8e8" stroke="#aaa" stroke-width="0.6"/></svg>
<svg class="a" style="left:865.00px;top:203.56px" width="6" height="6" viewBox="0 0 6 6"><rect x="0.5" y="0.5" width="5" height="5" rx="1" fill="#e8e8e8" stroke="#aaa" stroke-width="0.6"/><path d="M1.2 2.9 L2.4 4.3 L4.9 1.1" fill="none" stroke="#1a1a1a" stroke-width="1.2"/></svg>
<svg class="a" style="left:897.6px;top:205.76px" width="5" height="5" viewBox="0 0 5 5"><path d="M0.5 0.5 L4.3 4.3 M4.3 0.5 L0.5 4.3" stroke="#f28e8e" stroke-width="0.9"/></svg>
<!-- /ROWS -->
</body></html>
